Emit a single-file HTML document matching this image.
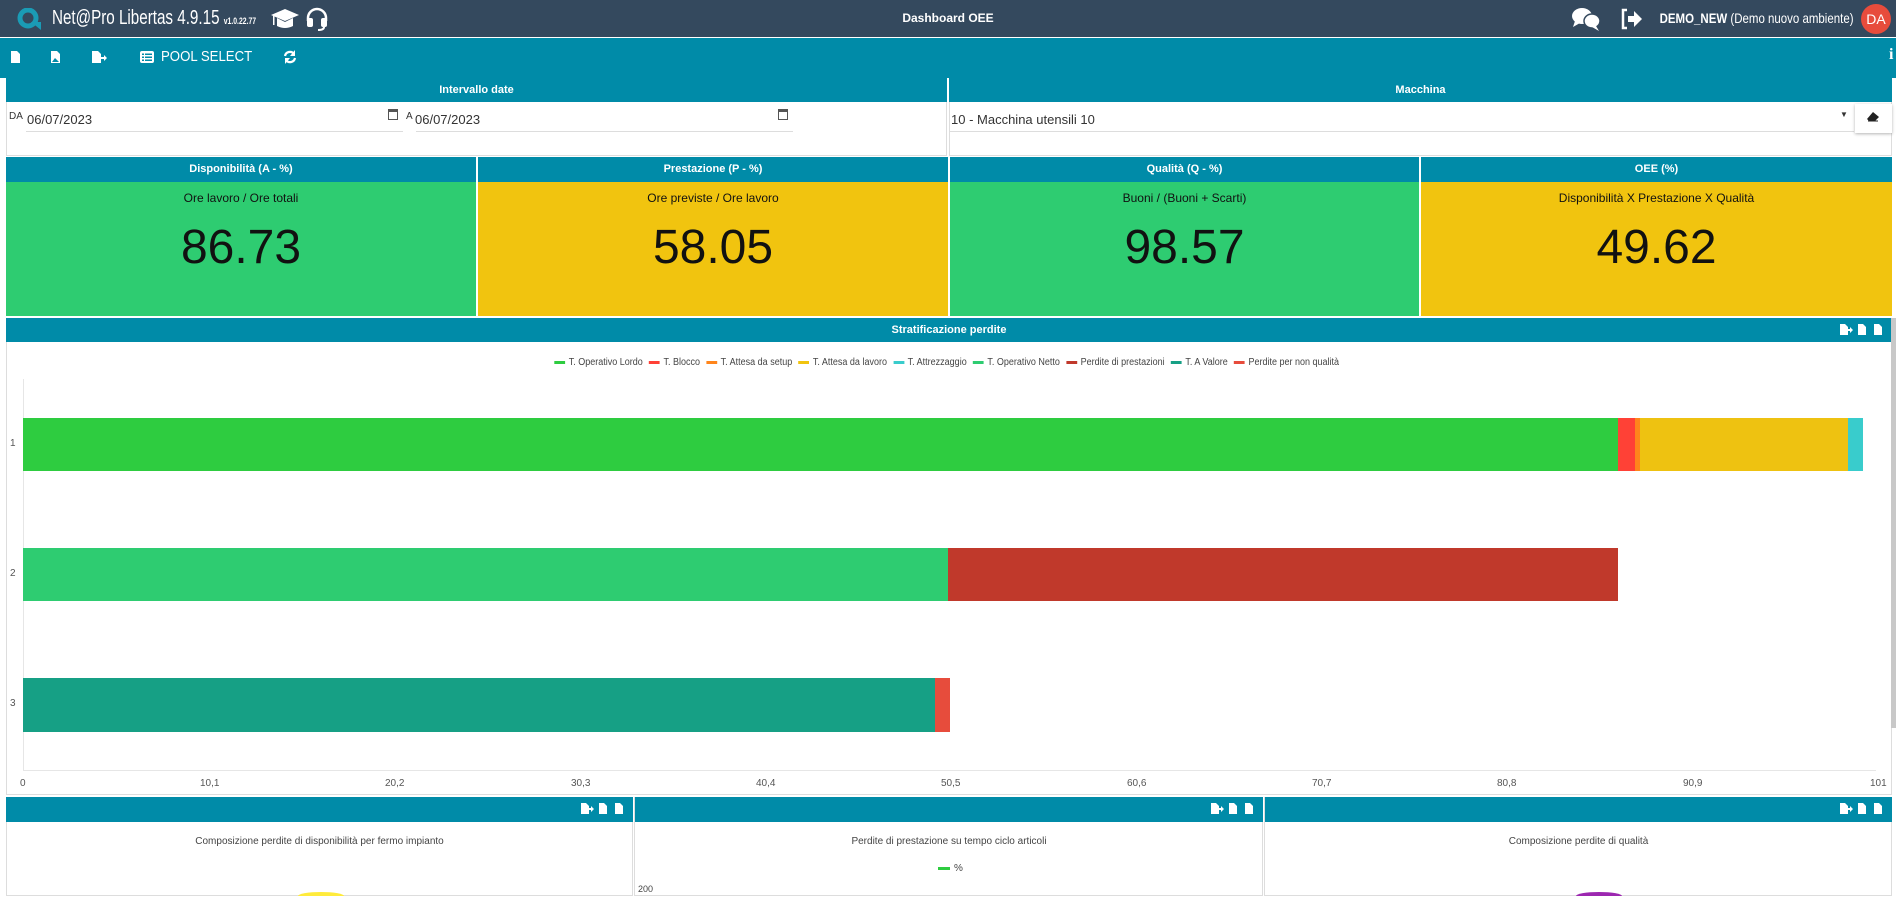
<!DOCTYPE html>
<html style="height:897px;overflow:hidden"><head><meta charset="utf-8"><style>
*{box-sizing:border-box;margin:0;padding:0}
body{width:1896px;height:897px;overflow:hidden;background:#fff;font-family:"Liberation Sans",sans-serif;position:relative;color:#333}
.a{position:absolute}
.top{left:0;top:0;width:1896px;height:37px;background:#34495e;color:#fff}
.bar2{left:0;top:38px;width:1896px;height:40px;background:#008ba8;color:#fff}
.hdr{background:#008ba8;color:#fff;font-size:11px;text-align:center;font-weight:bold}
.panel{border:1px solid #ddd;background:#fff}
.t{white-space:nowrap}
.sx{display:inline-block;transform:scaleX(.8);transform-origin:left center}
.card{color:#111;text-align:center}
.card .s{position:absolute;top:9px;width:100%;font-size:12px}
.card .n{position:absolute;top:38px;width:100%;font-size:48px}
.lg{display:inline-block;width:12px;height:3px;vertical-align:middle;margin:0 4px 0 7px}
.tick{font-size:10px;color:#555;top:778px}
</style></head><body>
<div class="a top">
 <svg class="a" style="left:17px;top:8px" width="28" height="24" viewBox="0 0 28 24"><circle cx="11" cy="10" r="8" fill="none" stroke="#1a9bb5" stroke-width="5"/><path d="M14 14 L24 22 L24 14 Z" fill="#1a9bb5"/></svg>
 <div class="a t sx" style="left:52px;top:7px;font-size:20px;transform:scaleX(.76)">Net@Pro Libertas 4.9.15 <span style="font-size:9px;font-weight:bold">v1.0.22.77</span></div>
 <svg class="a" style="left:270px;top:8px" width="30" height="22" viewBox="0 0 30 22"><path d="M15 1 L29 7 L15 13 L1 7Z" fill="#fff"/><path d="M7 10 L7 18 Q15 22 23 18 L23 10 L15 14Z" fill="#fff"/><rect x="3" y="8" width="1.5" height="9" fill="#fff"/></svg>
 <svg class="a" style="left:304px;top:6px" width="26" height="26" viewBox="0 0 26 26"><path d="M4 15 V12 A9 9 0 0 1 22 12 V15" fill="none" stroke="#fff" stroke-width="2.5"/><rect x="3" y="12" width="6" height="9" rx="2" fill="#fff"/><rect x="17" y="12" width="6" height="9" rx="2" fill="#fff"/><path d="M20 21 Q20 24 14 24" stroke="#fff" stroke-width="2" fill="none"/></svg>
 <div class="a t" style="left:0;width:1896px;top:11px;text-align:center;font-size:12px;font-weight:bold">Dashboard OEE</div>
 <svg class="a" style="left:1570px;top:6px" width="32" height="26" viewBox="0 0 32 26"><ellipse cx="12" cy="10" rx="10" ry="8" fill="#fff"/><path d="M5 15 L3 21 L10 17Z" fill="#fff"/><ellipse cx="22" cy="15" rx="8" ry="7" fill="#fff" stroke="#34495e" stroke-width="1.5"/><path d="M26 20 L29 25 L22 21Z" fill="#fff"/></svg>
 <svg class="a" style="left:1620px;top:8px" width="24" height="22" viewBox="0 0 24 22"><path d="M7 2 H3 V20 H7" fill="none" stroke="#fff" stroke-width="2.5"/><path d="M8 8 H14 V3 L22 11 L14 19 V14 H8Z" fill="#fff"/></svg>
 <div class="a t" style="right:42px;top:10px;font-size:14px;transform:scaleX(.82);transform-origin:right center"><b>DEMO_NEW</b> (Demo nuovo ambiente)</div>
 <div class="a" style="left:1861px;top:4px;width:30px;height:30px;border-radius:50%;background:#e74c3c;font-size:14px;text-align:center;line-height:30px">DA</div>
</div>
<div class="a bar2">
 <svg class="a" style="left:11px;top:13px" width="9" height="12" viewBox="0 0 9 12"><path d="M0 0H6L9 3V12H0Z" fill="#fff"/></svg>
 <svg class="a" style="left:51px;top:13px" width="9" height="12" viewBox="0 0 9 12"><path d="M0 0H6L9 3V12H0Z" fill="#fff"/><path d="M1 11 L4 7 L8 11Z" fill="#008ba8"/></svg>
 <svg class="a" style="left:92px;top:13px" width="15" height="12" viewBox="0 0 15 12"><path d="M0 0H6L9 3V12H0Z" fill="#fff"/><path d="M8 6H12V4L15 7L12 10V8H8Z" fill="#fff"/></svg>
 <svg class="a" style="left:140px;top:13px" width="14" height="12" viewBox="0 0 14 12"><rect width="14" height="12" rx="2" fill="#fff"/><rect x="2" y="2.5" width="2" height="1.5" fill="#008ba8"/><rect x="5" y="2.5" width="7" height="1.5" fill="#008ba8"/><rect x="2" y="5.5" width="2" height="1.5" fill="#008ba8"/><rect x="5" y="5.5" width="7" height="1.5" fill="#008ba8"/><rect x="2" y="8.5" width="2" height="1.5" fill="#008ba8"/><rect x="5" y="8.5" width="7" height="1.5" fill="#008ba8"/></svg>
 <div class="a t" style="left:161px;top:10px;font-size:15px;transform:scaleX(.88);transform-origin:left center">POOL SELECT</div>
 <svg class="a" style="left:283px;top:12px" width="14" height="14" viewBox="0 0 14 14"><path d="M2 6 A5 5 0 0 1 11 4" fill="none" stroke="#fff" stroke-width="2.2"/><path d="M12 0 V6 H7Z" fill="#fff"/><path d="M12 8 A5 5 0 0 1 3 10" fill="none" stroke="#fff" stroke-width="2.2"/><path d="M2 14 V8 H7Z" fill="#fff"/></svg>
 <div class="a" style="left:1889px;top:8px;font-size:16px;font-weight:bold;font-family:'Liberation Serif',serif">i</div>
</div>
<div class="a panel" style="left:6px;top:78px;width:941px;height:78px"></div>
<div class="a hdr" style="left:6px;top:78px;width:941px;height:24px;line-height:24px">Intervallo date</div>
<div class="a t" style="left:9px;top:111px;font-size:10px">DA</div>
<div class="a t" style="left:27px;top:112px;font-size:13px">06/07/2023</div>
<div class="a" style="left:26px;top:131px;width:377px;height:1px;background:#ddd"></div>
<div class="a" style="left:388px;top:109px;width:10px;height:11px;border:1.5px solid #555;border-top-width:3px"></div>
<div class="a t" style="left:406px;top:111px;font-size:10px">A</div>
<div class="a t" style="left:415px;top:112px;font-size:13px">06/07/2023</div>
<div class="a" style="left:416px;top:131px;width:377px;height:1px;background:#ddd"></div>
<div class="a" style="left:778px;top:109px;width:10px;height:11px;border:1.5px solid #555;border-top-width:3px"></div>
<div class="a panel" style="left:949px;top:78px;width:943px;height:78px"></div>
<div class="a hdr" style="left:949px;top:78px;width:943px;height:24px;line-height:24px">Macchina</div>
<div class="a t" style="left:951px;top:112px;font-size:13px">10 - Macchina utensili 10</div>
<div class="a" style="left:949px;top:131px;width:905px;height:1px;background:#ddd"></div>
<div class="a t" style="left:1840px;top:110px;font-size:8px">&#9660;</div>
<div class="a" style="left:1855px;top:104px;width:37px;height:29px;background:#fff;box-shadow:0 1px 3px rgba(0,0,0,.3)"></div>
<svg class="a" style="left:1867px;top:112px" width="12" height="10" viewBox="0 0 12 10"><path d="M6 0 L12 5 L8 9 H2 L0 7Z" fill="#222"/><path d="M1 9H11" stroke="#222"/></svg>
<div class="a hdr" style="left:6px;top:157px;width:470px;height:25px;line-height:25px">Disponibilità (A - %)</div>
<div class="a card" style="left:6px;top:182px;width:470px;height:134px;background:#2ecc71"><div class="s">Ore lavoro / Ore totali</div><div class="n">86.73</div></div>
<div class="a hdr" style="left:478px;top:157px;width:470px;height:25px;line-height:25px">Prestazione (P - %)</div>
<div class="a card" style="left:478px;top:182px;width:470px;height:134px;background:#f1c40f"><div class="s">Ore previste / Ore lavoro</div><div class="n">58.05</div></div>
<div class="a hdr" style="left:950px;top:157px;width:469px;height:25px;line-height:25px">Qualità (Q - %)</div>
<div class="a card" style="left:950px;top:182px;width:469px;height:134px;background:#2ecc71"><div class="s">Buoni / (Buoni + Scarti)</div><div class="n">98.57</div></div>
<div class="a hdr" style="left:1421px;top:157px;width:471px;height:25px;line-height:25px">OEE (%)</div>
<div class="a card" style="left:1421px;top:182px;width:471px;height:134px;background:#f1c40f"><div class="s">Disponibilità X Prestazione X Qualità</div><div class="n">49.62</div></div>
<div class="a panel" style="left:6px;top:318px;width:1886px;height:477px"></div>
<div class="a hdr" style="left:6px;top:318px;width:1886px;height:24px;line-height:24px">Stratificazione perdite</div>
<svg class="a" style="left:1840px;top:324px" width="44" height="11" viewBox="0 0 44 11"><path d="M0 0H5L8 3V11H0Z" fill="#fff"/><path d="M7 5H10V3L13 6L10 9V7H7Z" fill="#fff"/><path d="M18 0H23L26 3V11H18Z" fill="#fff"/><path d="M34 0H39L42 3V11H34Z" fill="#fff"/></svg>
<div class="a" style="left:1891px;top:318px;width:5px;height:410px;background:#c8c8c8"></div>
<div class="a t" style="left:548px;top:357px;font-size:10px;color:#444;transform:scaleX(.9);transform-origin:left center">
<span class="lg" style="background:#2ecc40"></span>T. Operativo Lordo<span class="lg" style="background:#ff4136"></span>T. Blocco<span class="lg" style="background:#ff851b"></span>T. Attesa da setup<span class="lg" style="background:#f1c40f"></span>T. Attesa da lavoro<span class="lg" style="background:#39cccc"></span>T. Attrezzaggio<span class="lg" style="background:#2ecc71"></span>T.  Operativo Netto<span class="lg" style="background:#c0392b"></span>Perdite di prestazioni<span class="lg" style="background:#16a085"></span>T. A Valore<span class="lg" style="background:#e74c3c"></span>Perdite per non qualità</div>
<div class="a" style="left:23px;top:379px;width:1px;height:392px;background:#e6e6e6"></div>
<div class="a" style="left:23px;top:770px;width:1853px;height:1px;background:#e6e6e6"></div>
<div class="a" style="left:23px;top:418px;width:1595px;height:53px;background:#2ecc40"></div>
<div class="a" style="left:1618px;top:418px;width:17px;height:53px;background:#ff4136"></div>
<div class="a" style="left:1635px;top:418px;width:5px;height:53px;background:#ff851b"></div>
<div class="a" style="left:1640px;top:418px;width:208px;height:53px;background:#eec211"></div>
<div class="a" style="left:1848px;top:418px;width:15px;height:53px;background:#39cccc"></div>
<div class="a" style="left:23px;top:548px;width:925px;height:53px;background:#2ecc71"></div>
<div class="a" style="left:948px;top:548px;width:670px;height:53px;background:#c0392b"></div>
<div class="a" style="left:23px;top:678px;width:912px;height:54px;background:#16a085"></div>
<div class="a" style="left:935px;top:678px;width:15px;height:54px;background:#e74c3c"></div>
<div class="a t" style="left:10px;top:438px;font-size:10px;color:#555">1</div>
<div class="a t" style="left:10px;top:568px;font-size:10px;color:#555">2</div>
<div class="a t" style="left:10px;top:698px;font-size:10px;color:#555">3</div>
<div class="a t tick" style="left:20px">0</div>
<div class="a t tick" style="left:200px">10,1</div>
<div class="a t tick" style="left:385px">20,2</div>
<div class="a t tick" style="left:571px">30,3</div>
<div class="a t tick" style="left:756px">40,4</div>
<div class="a t tick" style="left:941px">50,5</div>
<div class="a t tick" style="left:1127px">60,6</div>
<div class="a t tick" style="left:1312px">70,7</div>
<div class="a t tick" style="left:1497px">80,8</div>
<div class="a t tick" style="left:1683px">90,9</div>
<div class="a t tick" style="left:1870px">101</div>
<div class="a panel" style="left:6px;top:797px;width:627px;height:99px"></div>
<div class="a panel" style="left:634px;top:797px;width:629px;height:99px"></div>
<div class="a panel" style="left:1264px;top:797px;width:628px;height:99px"></div>
<div class="a hdr" style="left:6px;top:797px;width:627px;height:25px"></div>
<div class="a hdr" style="left:635px;top:797px;width:628px;height:25px"></div>
<div class="a hdr" style="left:1265px;top:797px;width:627px;height:25px"></div>
<svg class="a" style="left:581px;top:803px" width="44" height="11" viewBox="0 0 44 11"><path d="M0 0H5L8 3V11H0Z" fill="#fff"/><path d="M7 5H10V3L13 6L10 9V7H7Z" fill="#fff"/><path d="M18 0H23L26 3V11H18Z" fill="#fff"/><path d="M34 0H39L42 3V11H34Z" fill="#fff"/></svg>
<svg class="a" style="left:1211px;top:803px" width="44" height="11" viewBox="0 0 44 11"><path d="M0 0H5L8 3V11H0Z" fill="#fff"/><path d="M7 5H10V3L13 6L10 9V7H7Z" fill="#fff"/><path d="M18 0H23L26 3V11H18Z" fill="#fff"/><path d="M34 0H39L42 3V11H34Z" fill="#fff"/></svg>
<svg class="a" style="left:1840px;top:803px" width="44" height="11" viewBox="0 0 44 11"><path d="M0 0H5L8 3V11H0Z" fill="#fff"/><path d="M7 5H10V3L13 6L10 9V7H7Z" fill="#fff"/><path d="M18 0H23L26 3V11H18Z" fill="#fff"/><path d="M34 0H39L42 3V11H34Z" fill="#fff"/></svg>
<div class="a t" style="left:6px;width:627px;top:836px;text-align:center;font-size:10px;color:#444">Composizione perdite di disponibilità per fermo impianto</div>
<div class="a t" style="left:635px;width:628px;top:836px;text-align:center;font-size:10px;color:#444">Perdite di prestazione su tempo ciclo articoli</div>
<div class="a t" style="left:1265px;width:627px;top:836px;text-align:center;font-size:10px;color:#444">Composizione perdite di qualità</div>
<div class="a t" style="left:938px;top:863px;font-size:10px;color:#444"><span class="lg" style="background:#2ecc40;margin:0 4px 0 0"></span>%</div>
<div class="a t" style="left:638px;top:884px;font-size:9px;color:#444">200</div>
<div class="a" style="left:298px;top:892px;width:46px;height:4px;background:#ffeb3b;border-radius:50% 50% 0 0 / 100% 100% 0 0"></div>
<div class="a" style="left:1576px;top:892px;width:46px;height:4px;background:#9c27b0;border-radius:50% 50% 0 0 / 100% 100% 0 0"></div>
</body></html>
